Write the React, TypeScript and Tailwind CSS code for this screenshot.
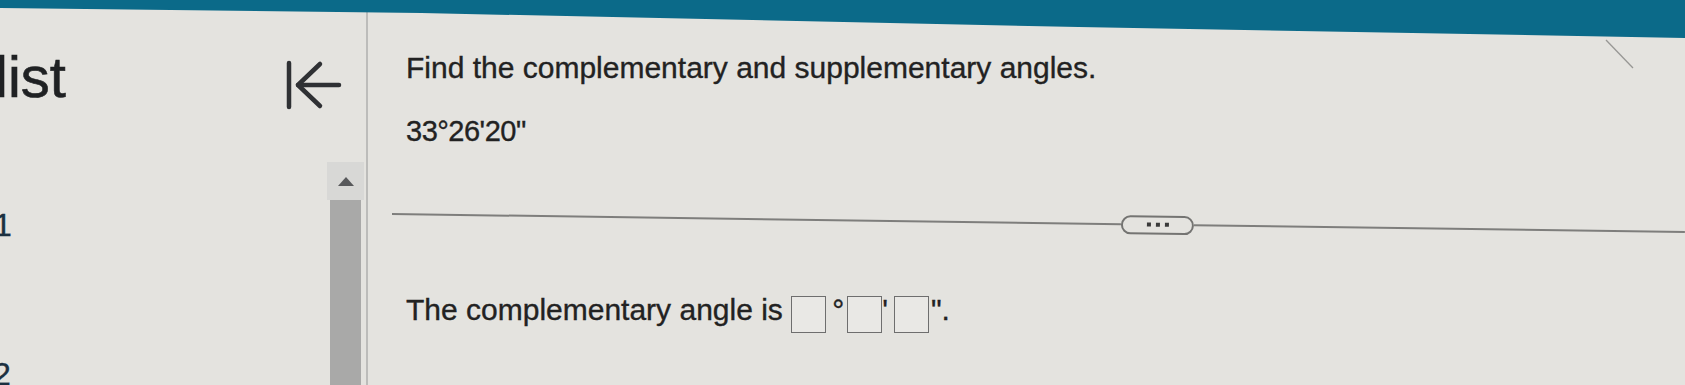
import React from 'react';

// ─── Collapse arrow (|←) ──────────────────────────────────────────────────────
function CollapseArrow() {
  return (
    <svg width={58} height={50} viewBox="0 0 58 50" fill="none" stroke="#2f3134" strokeWidth={4.5} strokeLinecap="round">
      <line x1={5} y1={3} x2={5} y2={47} />
      <line x1={14} y1={25} x2={55} y2={25} />
      <polyline points="36,4 14,25 36,46" strokeLinejoin="round" />
    </svg>
  );
}

// ─── Answer box ───────────────────────────────────────────────────────────────
function AnswerBox() {
  return <span className="inline-block w-[35px] h-[37px] border-[1.5px] border-[#6e6e6e] bg-[#e9e8e5] align-[-13px]" />;
}

export default function App() {
  return (
    <div className="relative w-[1685px] h-[385px] overflow-hidden bg-[#e4e3df] font-['Liberation_Sans',Arial,sans-serif] text-[#222222]">
      {/* teal header, skewed in the photo */}
      <div className="absolute left-0 top-0 w-full h-[40px] bg-[#0b6a89] [clip-path:polygon(0_0,100%_0,100%_38px,64%_27px,25%_13px,0_8px)]" />

      {/* faint scratch top right */}
      <svg className="absolute left-[1604px] top-[38px]" width={32} height={32}>
        <line x1={2} y1={2} x2={29} y2={30} stroke="#7e7e7c" strokeWidth={1.3} opacity={0.75} />
      </svg>

      <div className="flex h-full">
        {/* Left: assignment list */}
        <div className="w-[368px] shrink-0 flex flex-col border-r-2 border-[#bcbcba]">
          <div className="h-[162px] shrink-0 flex items-start justify-between">
            <span className="-ml-[5px] pt-[48px] text-[58px] leading-none text-[#1f2123] [-webkit-text-stroke:0.6px_#1f2123]">list</span>
            <div className="mt-[60px] mr-[24px]">
              <CollapseArrow />
            </div>
          </div>
          <div className="flex-1 min-h-0 flex">
            <div className="flex-1 flex flex-col text-[32px] leading-none text-[#1c3040] [-webkit-text-stroke:0.4px_#1c3040]">
              <span className="mt-[47px] -ml-[6px]">1</span>
              <span className="mt-[117px] -ml-[7px]">2</span>
            </div>
            <div className="w-[37px] mr-[2px] flex flex-col">
              <div className="h-[38px] bg-[#d8d8d6] flex items-center justify-center">
                <span className="w-0 h-0 border-l-[8px] border-r-[8px] border-b-[9px] border-l-transparent border-r-transparent border-b-[#58595b]" />
              </div>
              <div className="flex-1 mx-[3px] bg-[#a9a9a8]" />
            </div>
          </div>
        </div>

        {/* Right: question */}
        <div className="flex-1 pl-[38px] pt-[51px] [-webkit-text-stroke:0.35px_#222222]">
          <p className="text-[30px] leading-[34px]">Find the complementary and supplementary angles.</p>
          <p className="mt-[29px] text-[29px] leading-[34px] tracking-[-0.5px]">33°26'20"</p>

          <div className="mt-[57px] -ml-[14px] h-[18px] flex items-center rotate-[0.8deg] origin-left [-webkit-text-stroke:0px]">
            <div className="w-[729px] h-[2px] bg-[#7e7e7c]" />
            <button className="w-[73px] h-[19px] shrink-0 rounded-[10px] border-2 border-[#747472] flex items-center justify-center gap-[5px]">
              <span className="w-[4px] h-[4px] bg-[#3a3a3a]" />
              <span className="w-[4px] h-[4px] bg-[#3a3a3a]" />
              <span className="w-[4px] h-[4px] bg-[#3a3a3a]" />
            </button>
            <div className="flex-1 h-[2px] bg-[#7e7e7c]" />
          </div>

          <p className="mt-[70px] text-[30px] leading-[34px] whitespace-nowrap">
            The complementary angle is <AnswerBox />
            <span className="ml-[6px]">°</span>
            <span className="ml-[3px]"><AnswerBox /></span>
            <span>'</span>
            <span className="ml-[6px]"><AnswerBox /></span>
            <span className="ml-[2px]">".</span>
          </p>
        </div>
      </div>
    </div>
  );
}
